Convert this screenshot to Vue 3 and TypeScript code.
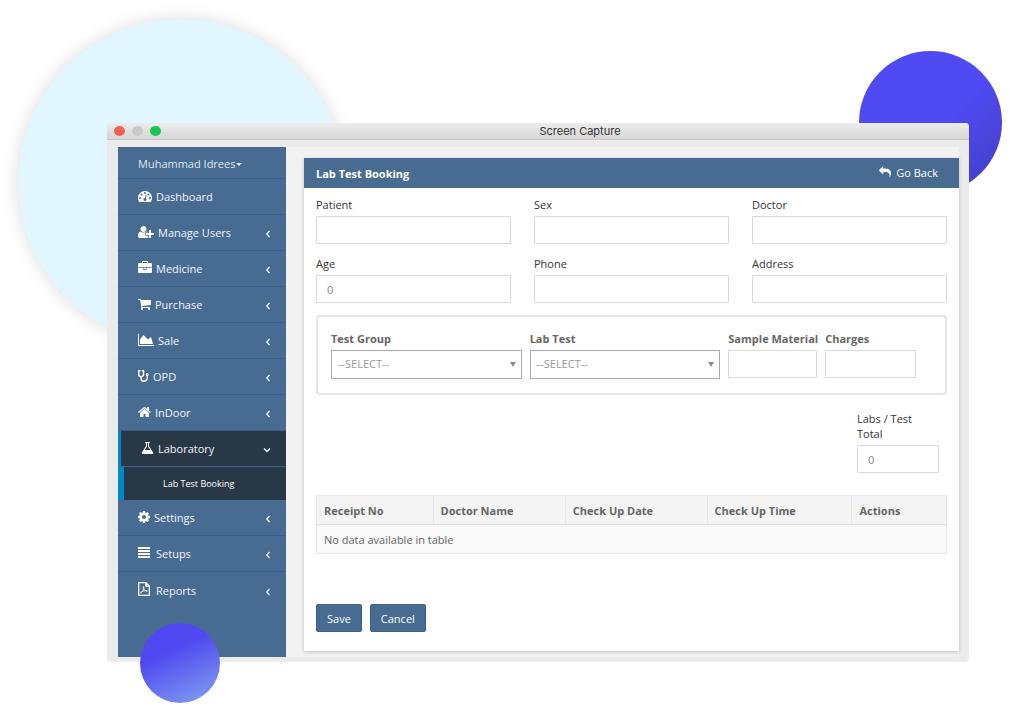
<script setup lang="ts">
import { ref } from 'vue'

interface Shape {
  d: string
  stroke?: number
}
interface Icon {
  box: string
  width: number
  shapes: Shape[]
}
interface NavItem {
  label: string
  icon: Icon
  children?: string[]
  branch: boolean
}

const icons: Record<string, Icon> = {
  gauge: {
    box: '0 0 1792 1792',
    width: 14,
    shapes: [{ d: 'M384 1152q0-53-37.5-90.5t-90.5-37.5-90.5 37.5-37.5 90.5 37.5 90.5 90.5 37.5 90.5-37.5 37.5-90.5zm192-448q0-53-37.5-90.5t-90.5-37.5-90.5 37.5-37.5 90.5 37.5 90.5 90.5 37.5 90.5-37.5 37.5-90.5zm428 481l101-382q6-26-7.5-48.5t-38.5-29.5-48 6.5-30 39.5l-101 382q-60 5-107 43.5t-63 98.5q-20 77 20 146t117 89 146-20 89-117q16-60-6-117t-72-91zm660-33q0-53-37.5-90.5t-90.5-37.5-90.5 37.5-37.5 90.5 37.5 90.5 90.5 37.5 90.5-37.5 37.5-90.5zm-640-640q0-53-37.5-90.5t-90.5-37.5-90.5 37.5-37.5 90.5 37.5 90.5 90.5 37.5 90.5-37.5 37.5-90.5zm448 192q0-53-37.5-90.5t-90.5-37.5-90.5 37.5-37.5 90.5 37.5 90.5 90.5 37.5 90.5-37.5 37.5-90.5zm320 448q0 261-141 483-19 29-54 29h-1402q-35 0-54-29-141-221-141-483 0-182 71-348t191-286 286-191 348-71 348 71 286 191 191 286 71 348z' }],
  },
  userPlus: {
    box: '0 0 2048 1792',
    width: 16,
    shapes: [{ d: 'M704 896q-159 0-271.5-112.5t-112.5-271.5 112.5-271.5 271.5-112.5 271.5 112.5 112.5 271.5-112.5 271.5-271.5 112.5zm960 128h352q13 0 22.5 9.5t9.5 22.5v192q0 13-9.5 22.5t-22.5 9.5h-352v352q0 13-9.5 22.5t-22.5 9.5h-192q-13 0-22.5-9.5t-9.5-22.5v-352h-352q-13 0-22.5-9.5t-9.5-22.5v-192q0-13 9.5-22.5t22.5-9.5h352v-352q0-13 9.5-22.5t22.5-9.5h192q13 0 22.5 9.5t9.5 22.5v352zm-736 224q0 52 38 90t90 38h256v238q-68 50-171 50h-874q-121 0-194-69t-73-190q0-53 3.5-103.5t14-109 26.5-108.5 43-97.5 62-81 85.5-53.5 111.5-20q19 0 39 17 79 61 154.5 91.5t164.5 30.5 164.5-30.5 154.5-91.5q20-17 39-17 132 0 217 96h-223q-52 0-90 38t-38 90v192z' }],
  },
  briefcase: {
    box: '0 0 1792 1792',
    width: 14,
    shapes: [{ d: 'M640 256h512v-128h-512v128zm1152 640v480q0 66-47 113t-113 47h-1472q-66 0-113-47t-47-113v-480h672v160q0 26 19 45t45 19h320q26 0 45-19t19-45v-160h672zm-768 0v128h-256v-128h256zm768-480v384h-1792v-384q0-66 47-113t113-47h352v-160q0-40 28-68t68-28h576q40 0 68 28t28 68v160h352q66 0 113 47t47 113z' }],
  },
  cart: {
    box: '64 0 1664 1792',
    width: 13,
    shapes: [{ d: 'M704 1536q0 52-38 90t-90 38-90-38-38-90 38-90 90-38 90 38 38 90zm896 0q0 52-38 90t-90 38-90-38-38-90 38-90 90-38 90 38 38 90zm128-1088v512q0 24-16.5 42.5t-40.5 21.5l-1044 122q13 60 13 70 0 16-24 64h920q26 0 45 19t19 45-19 45-45 19h-1024q-26 0-45-19t-19-45q0-11 8-31.5t16-36 21.5-40 15.5-29.5l-177-823h-204q-26 0-45-19t-19-45 19-45 45-19h256q16 0 28.5 6.5t19.5 15.5 13 24.5 8 26 5.5 29.5 4.5 26h1201q26 0 45 19t19 45z' }],
  },
  chart: {
    box: '0 0 2048 1792',
    width: 16,
    shapes: [{ d: 'M2048 1536v128h-2048v-1536h128v1408h1920zm-384-1024l256 896h-1664v-576l448-576 576 576z' }],
  },
  stethoscope: {
    box: '0 0 1408 1792',
    width: 11,
    shapes: [
      { d: 'M250 215H90V680Q90 980 400 980T710 680V215H550M400 980V1240Q400 1560 740 1560T1180 1240V800', stroke: 180 },
      { d: 'M1180 510a190 190 0 1 0 1 0zm0 130a60 60 0 1 1-1 0z' },
    ],
  },
  home: {
    box: '64 0 1664 1792',
    width: 13,
    shapes: [{ d: 'M1472 992v480q0 26-19 45t-45 19h-384v-384h-256v384h-384q-26 0-45-19t-19-45v-480q0-1 .5-3t.5-3l575-474 575 474q1 2 1 6zm223-69l-62 74q-8 9-21 11h-3q-13 0-21-7l-692-577-692 577q-12 8-24 7-13-2-21-11l-62-74q-8-10-7-23.5t11-21.5l719-599q32-26 76-26t76 26l244 204v-195q0-14 9-23t23-9h192q14 0 23 9t9 23v408l219 182q10 8 11 21.5t-7 23.5z' }],
  },
  flask: {
    box: '64 0 1664 1792',
    width: 13,
    shapes: [{ d: 'M1591 1448q56 89 21.5 152.5t-140.5 63.5h-1152q-106 0-140.5-63.5t21.5-152.5l503-793v-399h-64q-26 0-45-19t-19-45 19-45 45-19h512q26 0 45 19t19 45-19 45-45 19h-64v399zm-779-725l-272 429h712l-272-429-20-31v-436h-128v436z' }],
  },
  cog: {
    box: '128 0 1536 1792',
    width: 12,
    shapes: [{ d: 'M1152 896q0-106-75-181t-181-75-181 75-75 181 75 181 181 75 181-75 75-181zm512-109v222q0 12-8 23t-20 13l-185 28q-19 54-39 91 35 50 107 138 10 12 10 25t-9 23q-27 37-99 108t-94 71q-12 0-26-9l-138-108q-44 23-91 38-16 136-29 186-7 28-36 28h-222q-14 0-24.5-8.5t-11.5-21.5l-28-184q-49-16-90-37l-141 107q-10 9-25 9-14 0-25-11-126-114-165-168-7-10-7-23 0-12 8-23 15-21 51-66.5t54-70.5q-27-50-41-99l-183-27q-13-2-21-12.5t-8-23.5v-222q0-12 8-23t19-13l186-28q14-46 39-92-40-57-107-138-10-12-10-24 0-10 9-23 26-36 98.5-107.5t94.5-71.5q13 0 26 10l138 107q44-23 91-38 16-136 29-186 7-28 36-28h222q14 0 24.5 8.5t11.5 21.5l28 184q49 16 90 37l142-107q9-9 24-9 13 0 25 10 129 119 165 170 7 8 7 22 0 12-8 23-15 21-51 66.5t-54 70.5q26 50 41 98l183 28q13 2 21 12.5t8 23.5z' }],
  },
  lines: {
    box: '0 0 14 14',
    width: 14,
    shapes: [{ d: 'M0 1h12v2H0zM0 4h12v2H0zM0 7h12v2H0zM0 10h12v2H0z' }],
  },
  pdf: {
    box: '0 0 1792 1792',
    width: 14,
    shapes: [
      { d: 'M90 90H1020L1450 520V1700H90ZM1000 90V540H1450', stroke: 160 },
      { d: 'M370 1400C560 1290 760 950 740 620C720 520 640 560 680 700C760 1010 960 1190 1180 1190C1260 1150 1200 1090 1090 1090C820 1100 560 1190 400 1290Z', stroke: 100 },
    ],
  },
}

const navItems: NavItem[] = [
  { label: 'Dashboard', icon: icons.gauge, branch: false },
  { label: 'Manage Users', icon: icons.userPlus, branch: true },
  { label: 'Medicine', icon: icons.briefcase, branch: true },
  { label: 'Purchase', icon: icons.cart, branch: true },
  { label: 'Sale', icon: icons.chart, branch: true },
  { label: 'OPD', icon: icons.stethoscope, branch: true },
  { label: 'InDoor', icon: icons.home, branch: true },
  { label: 'Laboratory', icon: icons.flask, branch: true, children: ['Lab Test Booking'] },
  { label: 'Settings', icon: icons.cog, branch: true },
  { label: 'Setups', icon: icons.lines, branch: true },
  { label: 'Reports', icon: icons.pdf, branch: true },
]

const fields = ref([
  { id: 'patient', label: 'Patient', value: '' },
  { id: 'sex', label: 'Sex', value: '' },
  { id: 'doctor', label: 'Doctor', value: '' },
  { id: 'age', label: 'Age', value: '0' },
  { id: 'phone', label: 'Phone', value: '' },
  { id: 'address', label: 'Address', value: '' },
])

const selects = [
  { id: 'test-group', label: 'Test Group' },
  { id: 'lab-test', label: 'Lab Test' },
]
const details = ref([
  { id: 'sample', label: 'Sample Material', value: '' },
  { id: 'charges', label: 'Charges', value: '' },
])
const total = ref('0')
const columns = ['Receipt No', 'Doctor Name', 'Check Up Date', 'Check Up Time', 'Actions']
</script>

<template>
  <div class="stage">
    <div class="orb orb-sky"></div>
    <div class="orb orb-indigo"></div>

    <div class="window">
      <header class="titlebar">
        <div class="lights"><i class="red"></i><i class="grey"></i><i class="green"></i></div>
        <span class="caption">Screen Capture</span>
      </header>

      <div class="frame">
        <nav class="sidebar">
          <button type="button" class="user">Muhammad Idrees<i class="caret"></i></button>
          <ul>
            <li v-for="item in navItems" :key="item.label" :class="{ open: item.children }">
              <a href="#" class="item">
                <svg class="icon" :viewBox="item.icon.box" :width="item.icon.width" height="14" aria-hidden="true">
                  <path
                    v-for="(s, i) in item.icon.shapes"
                    :key="i"
                    :d="s.d"
                    :fill="s.stroke ? 'none' : 'currentColor'"
                    fill-rule="evenodd"
                    :stroke="s.stroke ? 'currentColor' : 'none'"
                    :stroke-width="s.stroke"
                    stroke-linejoin="round"
                    stroke-linecap="round"
                  />
                </svg>
                <span class="text">{{ item.label }}</span>
                <svg v-if="item.branch" class="chevron" viewBox="0 0 8 8" width="8" height="8" aria-hidden="true">
                  <path :d="item.children ? 'M1 2.5L4 5.5L7 2.5' : 'M5.5 1L2.8 4L5.5 7'" fill="none" stroke="currentColor" stroke-width="1.3" />
                </svg>
              </a>
              <a v-for="child in item.children" :key="child" href="#" class="child">{{ child }}</a>
            </li>
          </ul>
        </nav>

        <main class="content">
          <section class="panel">
            <header class="panel-head">
              <h1>Lab Test Booking</h1>
              <a href="#" class="back">
                <svg viewBox="0 0 1792 1792" width="12" height="12" aria-hidden="true">
                  <path fill="currentColor" d="M1792 1120q0 166-127 451-20 48-37 76-12 17-28 17-32 0-32-35C1620 1130 1500 896 864 896H640v256q0 26-19 45t-45 19-45-19L19 685Q0 666 0 640t19-45L531 83q19-19 45-19t45 19 19 45v256h224q713 0 875 403 53 134 53 333z" />
                </svg>
                Go Back
              </a>
            </header>

            <form class="panel-body" @submit.prevent>
              <div class="grid">
                <div v-for="f in fields" :key="f.id" class="field">
                  <label :for="f.id">{{ f.label }}</label>
                  <input :id="f.id" v-model="f.value" type="text" />
                </div>
              </div>

              <div class="tests">
                <div v-for="s in selects" :key="s.id" class="field strong">
                  <label :for="s.id">{{ s.label }}</label>
                  <div class="select">
                    <select :id="s.id">
                      <option>--SELECT--</option>
                    </select>
                    <i class="arrow"></i>
                  </div>
                </div>
                <div v-for="d in details" :key="d.id" class="field strong">
                  <label :for="d.id">{{ d.label }}</label>
                  <input :id="d.id" v-model="d.value" type="text" />
                </div>
              </div>

              <div class="field total">
                <label for="total">Labs / Test Total</label>
                <input id="total" v-model="total" type="text" />
              </div>

              <table>
                <colgroup>
                  <col class="c1" /><col class="c2" /><col class="c3" /><col class="c4" /><col class="c5" />
                </colgroup>
                <thead>
                  <tr><th v-for="c in columns" :key="c" scope="col">{{ c }}</th></tr>
                </thead>
                <tbody>
                  <tr><td colspan="5">No data available in table</td></tr>
                </tbody>
              </table>

              <div class="actions">
                <button type="submit">Save</button>
                <button type="button">Cancel</button>
              </div>
            </form>
          </section>
        </main>
      </div>
      <div class="orb orb-small"></div>
    </div>
  </div>
</template>

<style>
body {
  background: #fff;
}
</style>

<style scoped>
* {
  box-sizing: border-box;
}
.stage {
  position: relative;
  min-height: 100vh;
  padding: 123px 55px 56px 107px;
  overflow: hidden;
  font: 11px/15px "Open Sans", sans-serif;
  color: #333;
}
.orb {
  position: absolute;
  border-radius: 50%;
}
.orb-sky {
  left: 18px;
  top: 19px;
  width: 326px;
  height: 326px;
  background: #e2f6ff;
  box-shadow: 0 0 18px rgba(0, 0, 0, 0.14);
}
.orb-indigo {
  right: 22px;
  top: 51px;
  width: 143px;
  height: 143px;
  background: linear-gradient(135deg, #4f4af2 55%, #4540cc 90%);
}
.orb-small {
  left: 33px;
  bottom: -41px;
  width: 80px;
  height: 80px;
  background: linear-gradient(155deg, #5048f0 35%, #7f9df0 95%);
}
.window {
  position: relative;
  border-radius: 4px;
  background: #ebebeb;
}
.titlebar {
  position: relative;
  display: flex;
  align-items: center;
  height: 17px;
  padding-left: 7px;
  border-radius: 4px 4px 0 0;
  border-bottom: 1px solid #c8c8c8;
  background: linear-gradient(#ececec, #d6d6d6);
}
.lights {
  display: flex;
  gap: 7px;
}
.lights i {
  width: 11px;
  height: 10px;
  border-radius: 50%;
}
.red {
  background: #ee6352;
}
.grey {
  background: #c9c9c9;
}
.green {
  background: #14c94e;
}
.caption {
  flex: 1;
  padding-left: 30px;
  text-align: center;
  font: 11px/16px Inter, "Liberation Sans", sans-serif;
  color: #333;
}
.frame {
  display: flex;
  padding: 7px 10px 5px 11px;
}
.sidebar {
  flex: none;
  width: 168px;
  background: #486b92;
  color: #f1f5f9;
}
.sidebar ul {
  margin: 0;
  padding: 0;
  list-style: none;
}
.user {
  display: flex;
  align-items: center;
  gap: 1px;
  width: 100%;
  height: 32px;
  padding: 2px 0 0 20px;
  border: 0;
  border-bottom: 1px solid #3b5f88;
  background: none;
  font: inherit;
  font-weight: 500;
  color: #dfe8f1;
}
.caret {
  margin-top: 2px;
  border: 3px solid transparent;
  border-top-color: currentColor;
  border-bottom: 0;
}
.item {
  display: flex;
  align-items: center;
  gap: 4px;
  height: 36px;
  padding: 0 14px 0 20px;
  border-bottom: 1px solid #3b5f88;
  font-weight: 500;
  color: inherit;
  text-decoration: none;
}
.icon {
  flex: none;
  margin-bottom: 2px;
  color: #fff;
}
.text {
  flex: 1;
}
.chevron {
  margin-top: 3px;
}
li:last-child .item {
  border-bottom: 0;
}
.open .item {
  padding-right: 15px;
  border-left: 3px solid #0088cc;
  border-bottom-color: #3f6186;
  background: #293846;
}
.child {
  display: block;
  height: 33px;
  padding-left: 39px;
  border-left: 6px solid #0088cc;
  background: #293846;
  font-size: 9px;
  line-height: 34px;
  color: #fff;
  text-decoration: none;
}
.content {
  flex: 1;
  min-width: 0;
  padding: 11px 0 6px 18px;
  background: #f2f2f2;
}
.panel {
  background: #fff;
  box-shadow: 0 1px 4px rgba(0, 0, 0, 0.2);
}
.panel-head {
  display: flex;
  align-items: center;
  justify-content: space-between;
  height: 30px;
  padding: 0 21px 0 12px;
  background: #486b92;
  color: #fff;
}
h1 {
  margin: 0;
  font-size: 11px;
  line-height: 15px;
  font-weight: 700;
}
.back {
  display: flex;
  align-items: center;
  gap: 5px;
  padding-bottom: 2px;
  color: #fff;
  text-decoration: none;
}
.panel-body {
  padding: 9px 12px 19px;
}
.grid {
  display: grid;
  grid-template-columns: repeat(3, 1fr);
  gap: 12px 23px;
}
.field {
  display: flex;
  flex-direction: column;
  gap: 4px;
  min-width: 0;
}
input {
  width: 100%;
  height: 28px;
  padding: 0 10px;
  border: 1px solid #d9d9d9;
  border-radius: 1px;
  background: #fff;
  font: 11px/15px "Open Sans", sans-serif;
  color: #888;
}
.tests {
  display: grid;
  grid-template-columns: 191fr 191fr 89fr 91fr;
  gap: 8px;
  margin-top: 12px;
  padding: 14px 29px 14px 13px;
  border: 2px solid #e5e5e5;
  border-radius: 4px;
}
.strong label {
  font-weight: 700;
  color: #666;
  white-space: nowrap;
}
.select {
  position: relative;
}
select {
  display: block;
  width: 100%;
  height: 29px;
  padding: 0 6px 2px;
  border: 1px solid #aaa;
  border-radius: 0;
  appearance: none;
  background: #fff;
  font: 11px/15px "Open Sans", sans-serif;
  color: #999;
}
.arrow {
  position: absolute;
  right: 6px;
  top: 12px;
  border: 3px solid transparent;
  border-top: 5px solid #888;
  border-bottom: 0;
  pointer-events: none;
}
.total {
  width: 82px;
  margin: 16px 8px 0 auto;
}
.total label {
  padding-right: 20px;
}
table {
  width: 100%;
  margin-top: 22px;
  table-layout: fixed;
  border-collapse: collapse;
  color: #666;
}
.c1 {
  width: 18.5%;
}
.c2 {
  width: 21%;
}
.c3 {
  width: 22.5%;
}
.c4 {
  width: 23%;
}
.c5 {
  width: 15%;
}
th,
td {
  height: 29px;
  padding: 0 7px;
  border: 1px solid #e7e7e7;
  text-align: left;
}
th {
  border-bottom-color: #ddd;
  background: #f4f4f4;
  font-weight: 700;
}
td {
  background: #f9f9f9;
}
.actions {
  display: flex;
  gap: 8px;
  margin-top: 50px;
}
.actions button {
  height: 28px;
  padding: 0 10px;
  border: 1px solid #3f6289;
  border-radius: 2px;
  background: #486b92;
  font: 11px/15px "Open Sans", sans-serif;
  color: #fff;
}
</style>
